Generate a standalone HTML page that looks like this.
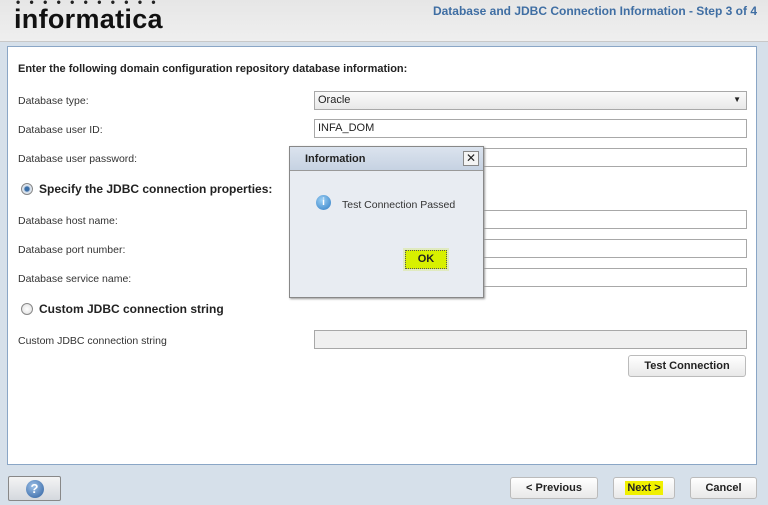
<!DOCTYPE html>
<html><head><meta charset="utf-8"><style>
*{margin:0;padding:0;box-sizing:border-box}
body{width:768px;height:505px;overflow:hidden;background:#d6e0ea;font-family:"Liberation Sans",sans-serif;position:relative;color:#222}
.hdr{position:absolute;left:0;top:0;width:768px;height:42px;background:linear-gradient(#e6e6e6,#efefef);border-bottom:1px solid #c8c8c8}
.logo{position:absolute;left:14px;top:4px;font-size:27px;font-weight:bold;color:#111;letter-spacing:0.3px}
.dots{position:absolute;left:16px;top:-5px;font-size:12px;letter-spacing:3px;font-weight:bold}
.step{position:absolute;right:11px;top:4px;font-size:12px;font-weight:bold;color:#3f6ea3}
.panel{position:absolute;left:7px;top:46px;width:750px;height:419px;background:#fff;border:1px solid #8aa6c6}
.t{position:absolute;font-size:10.5px;color:#333}
.b{position:absolute;font-size:12px;font-weight:bold;color:#222}
.in{position:absolute;left:314px;width:433px;height:19px;border:1px solid #a8a8a8;background:#fff;font-size:11px;padding:2px 3px}
.radio{position:absolute;width:12px;height:12px;border-radius:50%;border:1px solid #888;background:radial-gradient(#fff,#ddd)}
.btn{position:absolute;height:22px;border:1px solid #bbb;border-radius:3px;background:linear-gradient(#fff,#e8e8e8);font-size:11px;font-weight:bold;text-align:center;line-height:20px;color:#222}
.dlg{position:absolute;left:289px;top:146px;width:195px;height:152px;background:#e8ecf2;border:1px solid #888;box-shadow:1px 1px 2px #999}
.dt{height:24px;background:linear-gradient(#dbe3ee,#c6d2e2);border-bottom:1px solid #999;font-size:11px;font-weight:bold;padding:6px 0 0 15px}
</style></head><body>
<div class="hdr"><div class="dots">• • • • • • • • • • •</div><div class="logo">informatica</div>
<div class="step">Database and JDBC Connection Information - Step 3 of 4</div></div>
<div class="panel"></div>
<div class="b" style="left:18px;top:63px;font-size:11px">Enter the following domain configuration repository database information:</div>
<div class="t" style="left:18px;top:95px">Database type:</div>
<div class="in" style="top:91px;background:linear-gradient(#fafafa,#e8e8e8)">Oracle<span style="position:absolute;right:5px;top:3px;font-size:8px">▼</span></div>
<div class="t" style="left:18px;top:124px">Database user ID:</div>
<div class="in" style="top:119px">INFA_DOM</div>
<div class="t" style="left:18px;top:153px">Database user password:</div>
<div class="in" style="top:148px"></div>
<div class="radio" style="left:21px;top:183px;background:radial-gradient(#3a6ea8 30%,#cfdbe8 45%,#fff)"></div>
<div class="b" style="left:39px;top:182px">Specify the JDBC connection properties:</div>
<div class="t" style="left:18px;top:215px">Database host name:</div>
<div class="in" style="top:210px"></div>
<div class="t" style="left:18px;top:244px">Database port number:</div>
<div class="in" style="top:239px"></div>
<div class="t" style="left:18px;top:273px">Database service name:</div>
<div class="in" style="top:268px"></div>
<div class="radio" style="left:21px;top:303px"></div>
<div class="b" style="left:39px;top:302px">Custom JDBC connection string</div>
<div class="t" style="left:18px;top:335px">Custom JDBC connection string</div>
<div class="in" style="top:330px;background:#f0f0f0"></div>
<div class="btn" style="left:628px;top:355px;width:118px">Test Connection</div>
<div class="dlg"><div class="dt">Information<span style="position:absolute;right:4px;top:4px;width:16px;height:15px;border:1px solid #888;background:#f4f4f4;font-size:12px;line-height:12px;text-align:center;font-weight:normal">✕</span></div>
<div style="position:absolute;left:26px;top:48px;width:15px;height:15px;border-radius:50%;background:radial-gradient(circle at 40% 35%,#9cd0f5,#2f7cc4);color:#fff;font-size:10px;font-weight:bold;text-align:center;line-height:15px">i</div>
<div class="t" style="left:52px;top:52px">Test Connection Passed</div>
<div style="position:absolute;left:115px;top:103px;width:42px;height:19px;background:#d8f000;border:1px dotted #555;outline:2px solid #e0eac0;font-size:11px;font-weight:bold;text-align:center;line-height:17px">OK</div>
</div>
<div style="position:absolute;left:8px;top:476px;width:53px;height:25px;border:1px solid #888;border-radius:2px;background:linear-gradient(#f4f4f4,#d4d8de)"><div style="margin:3px auto;width:18px;height:18px;border-radius:50%;background:radial-gradient(circle at 40% 35%,#9cc0e8,#2c5e9e);color:#fff;font-weight:bold;font-size:13px;text-align:center;line-height:18px">?</div></div>
<div class="btn" style="left:510px;top:477px;width:88px">&lt; Previous</div>
<div class="btn" style="left:613px;top:477px;width:62px"><span style="background:#f0f000;padding:1px 2px">Next &gt;</span></div>
<div class="btn" style="left:690px;top:477px;width:67px">Cancel</div>
</body></html>
